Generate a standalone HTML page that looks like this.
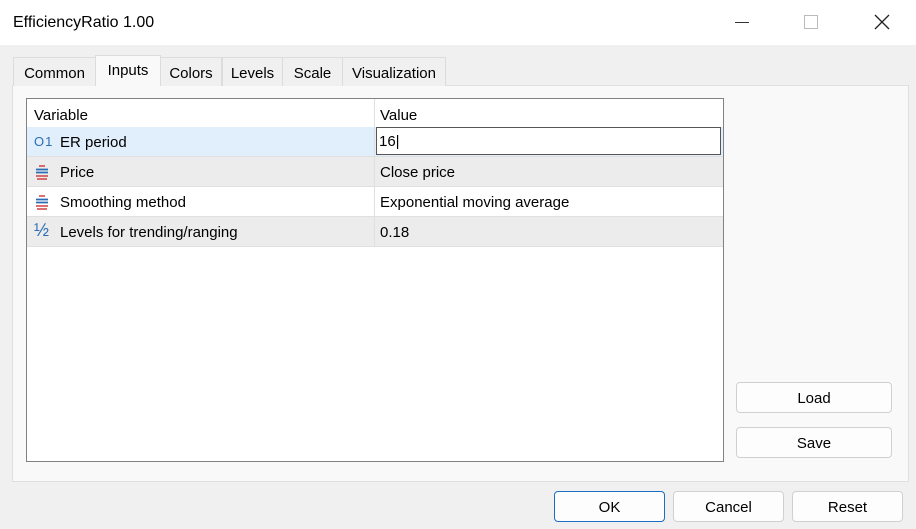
<!DOCTYPE html>
<html><head><style>
*{box-sizing:border-box;margin:0;padding:0}
body{width:916px;height:529px;background:#f0f0f0;font-family:"Liberation Sans",sans-serif;font-size:15px;color:#000;position:relative;overflow:hidden}
.abs{position:absolute}
.title{left:0;top:0;width:916px;height:45px;background:#fff}
.title span{position:absolute;left:13px;top:14px;font-size:16px}
.tab{position:absolute;top:57px;height:29px;border:1px solid #dcdcdc;border-bottom:none;background:#f0f0f0;font-size:15px;padding-top:7px;text-align:center}
.panel{left:12px;top:85px;width:897px;height:397px;background:#f9f9f9;border:1px solid #e0e0e0}
.table{left:26px;top:98px;width:698px;height:364px;background:#fff;border:1px solid #828282}
.row{position:absolute;left:0;width:696px;height:30px;border-bottom:1px solid #e0e0e0}
.row .c1{position:absolute;left:33px;top:7px}
.row .c2{position:absolute;left:353px;top:7px}
.row .div{position:absolute;left:347px;top:0;width:1px;height:100%;background:#e0e0e0}
.btn{position:absolute;background:#fdfdfd;border:1px solid #d0d0d0;border-radius:4px;text-align:center;font-size:15px;padding-top:7px}
</style></head><body>
<div class="abs title"><span>EfficiencyRatio 1.00</span>
<svg class="abs" style="left:734px;top:14px" width="16" height="16"><line x1="1" y1="8.5" x2="15" y2="8.5" stroke="#333"/></svg>
<svg class="abs" style="left:804px;top:15px" width="16" height="16"><rect x="0.5" y="0.5" width="13" height="13" fill="none" stroke="#bbb"/></svg>
<svg class="abs" style="left:874px;top:14px" width="16" height="16"><path d="M1 1L15 15M15 1L1 15" stroke="#222" stroke-width="1.3"/></svg>
</div>
<div class="abs panel"></div>
<div class="tab" style="left:13px;width:83px">Common</div>
<div class="tab" style="left:95px;width:66px;top:55px;height:31px;background:#f9f9f9;padding-top:6px">Inputs</div>
<div class="tab" style="left:160px;width:62px">Colors</div>
<div class="tab" style="left:222px;width:61px">Levels</div>
<div class="tab" style="left:282px;width:61px">Scale</div>
<div class="tab" style="left:342px;width:104px">Visualization</div>
<div class="abs table">
 <div class="row" style="top:0;height:29px;border-bottom:none"><span class="c1" style="left:7px;top:8px">Variable</span><span class="c2" style="top:8px">Value</span><div class="div"></div></div>
 <div class="row" style="top:28px;height:30px;background:#e1eefb"><span class="abs" style="left:7px;top:7px;color:#2a6db5;font-size:13px;letter-spacing:1px">O1</span><span class="c1">ER period</span><div class="div"></div>
  <div class="abs" style="left:349px;top:0;width:345px;height:28px;background:#fff;border:1px solid #555"><span class="abs" style="left:2px;top:5px">16|</span></div></div>
 <div class="row" style="top:58px;background:#ececec"><svg class="abs" style="left:7px;top:7px" width="16" height="16"><path d="M5 2h6M2 12h12M3 15h10" stroke="#d04040" stroke-width="1.6"/><path d="M2 5.5h12M2 8.5h12" stroke="#2a6db5" stroke-width="1.8"/></svg><span class="c1">Price</span><span class="c2">Close price</span><div class="div"></div></div>
 <div class="row" style="top:88px"><svg class="abs" style="left:7px;top:7px" width="16" height="16"><path d="M5 2h6M2 12h12M3 15h10" stroke="#d04040" stroke-width="1.6"/><path d="M2 5.5h12M2 8.5h12" stroke="#2a6db5" stroke-width="1.8"/></svg><span class="c1">Smoothing method</span><span class="c2">Exponential moving average</span><div class="div"></div></div>
 <div class="row" style="top:118px;background:#ececec"><span class="abs" style="left:7px;top:3px;color:#2a6db5;font-size:18px">½</span><span class="c1">Levels for trending/ranging</span><span class="c2">0.18</span><div class="div"></div></div>
</div>
<div class="btn" style="left:736px;top:382px;width:156px;height:31px">Load</div>
<div class="btn" style="left:736px;top:427px;width:156px;height:31px">Save</div>
<div class="btn" style="left:554px;top:491px;width:111px;height:31px;border-color:#1a6fc4">OK</div>
<div class="btn" style="left:673px;top:491px;width:111px;height:31px">Cancel</div>
<div class="btn" style="left:792px;top:491px;width:111px;height:31px">Reset</div>
</body></html>
